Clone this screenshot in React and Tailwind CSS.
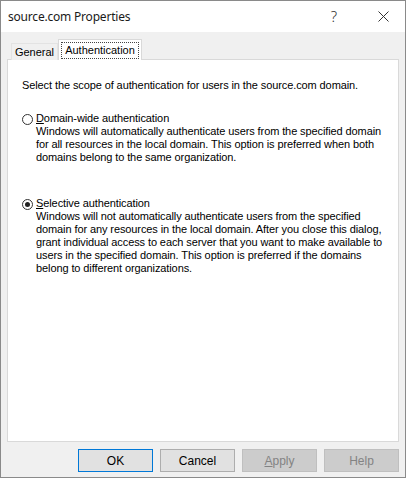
import { useState } from "react";

const body = { fontFamily: '"Liberation Sans", Arial, sans-serif' };

const domainLines = [
  "Windows will automatically authenticate users from the specified domain",
  "for all resources in the local domain. This option is preferred when both",
  "domains belong to the same organization.",
];

const selectiveLines = [
  "Windows will not automatically authenticate users from the specified",
  "domain for any resources in the local domain. After you close this dialog,",
  "grant individual access to each server that you want to make available to",
  "users in the specified domain. This option is preferred if the domains",
  "belong to different organizations.",
];

function Radio({ checked, onClick }) {
  return (
    <span
      onClick={onClick}
      className="mt-[2px] flex h-[11px] w-[11px] shrink-0 items-center justify-center rounded-full border border-[#333] bg-white"
    >
      {checked && <span className="h-[5px] w-[5px] rounded-full bg-[#222]" />}
    </span>
  );
}

function Option({ accessKey, rest, checked, onSelect, lines }) {
  return (
    <div className="flex gap-[3px]">
      <Radio checked={checked} onClick={onSelect} />
      <div className="flex-1 whitespace-nowrap text-[11px] leading-[13px] tracking-[-0.1px] text-black">
        <div onClick={onSelect}>
          <span className="underline underline-offset-1">{accessKey}</span>
          {rest}
        </div>
        {lines.map((l) => (
          <div key={l}>{l}</div>
        ))}
      </div>
    </div>
  );
}

export default function App() {
  const [scope, setScope] = useState("selective");

  return (
    <div className="h-[481px] w-[407px] overflow-hidden bg-white">
      <div className="flex h-[478px] w-[406px] flex-col border border-[#8a8a8a]">
        <div className="flex h-[31px] items-center bg-white pl-[7px] pr-[16px]">
          <span
            className="flex-1 text-[12px] tracking-[-0.2px] text-[#1a1a1a]"
            style={{ fontFamily: '"Noto Sans", "Open Sans", sans-serif' }}
          >
            source.com Properties
          </span>
          <span
            className="mr-[41px] text-[15px] font-light text-[#333]"
            style={{ fontFamily: '"Noto Sans", sans-serif' }}
          >
            ?
          </span>
          <svg width="11" height="11" viewBox="0 0 11 11">
            <path d="M0.5 0.5 L10.5 10.5 M10.5 0.5 L0.5 10.5" stroke="#333" strokeWidth="1" />
          </svg>
        </div>

        <div className="flex flex-1 flex-col bg-[#f0f0f0] px-[6px] pt-[7px]" style={body}>
          <div className="relative z-10 -mb-px flex h-[21px] items-end pl-[4px] text-[11px] text-black">
            <div className="flex h-[17px] w-[47px] items-center justify-center border border-b-0 border-[#e3e3e3] bg-[#f0f0f0]">
              General
            </div>
            <div className="flex h-[21px] w-[84px] items-center justify-center border border-b-0 border-[#d9d9d9] bg-white px-[2px] pt-[1px]">
              <div className="flex h-[17px] w-full items-center justify-center border border-dotted border-[#444]">
                Authentication
              </div>
            </div>
          </div>

          <div className="h-[383px] border border-[#d9d9d9] bg-white pl-[14px] pr-[16px] pt-[19px]">
            <p className="whitespace-nowrap text-[11px] leading-[13px] tracking-[-0.1px] text-black">
              Select the scope of authentication for users in the source.com domain.
            </p>

            <div className="mt-[20px]">
              <Option
                accessKey="D"
                rest="omain-wide authentication"
                checked={scope === "domain"}
                onSelect={() => setScope("domain")}
                lines={domainLines}
              />
            </div>

            <div className="mt-[33px]">
              <Option
                accessKey="S"
                rest="elective authentication"
                checked={scope === "selective"}
                onSelect={() => setScope("selective")}
                lines={selectiveLines}
              />
            </div>
          </div>

          <div className="mt-[7px] flex justify-end gap-[7px] text-[12px]">
            <button className="h-[23px] w-[75px] border border-[#0078d7] bg-[#e1e1e1] text-black">
              OK
            </button>
            <button className="h-[23px] w-[75px] border border-[#adadad] bg-[#e1e1e1] text-black">
              Cancel
            </button>
            <button className="h-[23px] w-[75px] border border-[#bfbfbf] bg-[#cccccc] text-[#838383]" disabled>
              <span className="underline underline-offset-1">A</span>pply
            </button>
            <button className="h-[23px] w-[75px] border border-[#bfbfbf] bg-[#cccccc] text-[#838383]" disabled>
              Help
            </button>
          </div>
        </div>
      </div>
    </div>
  );
}
